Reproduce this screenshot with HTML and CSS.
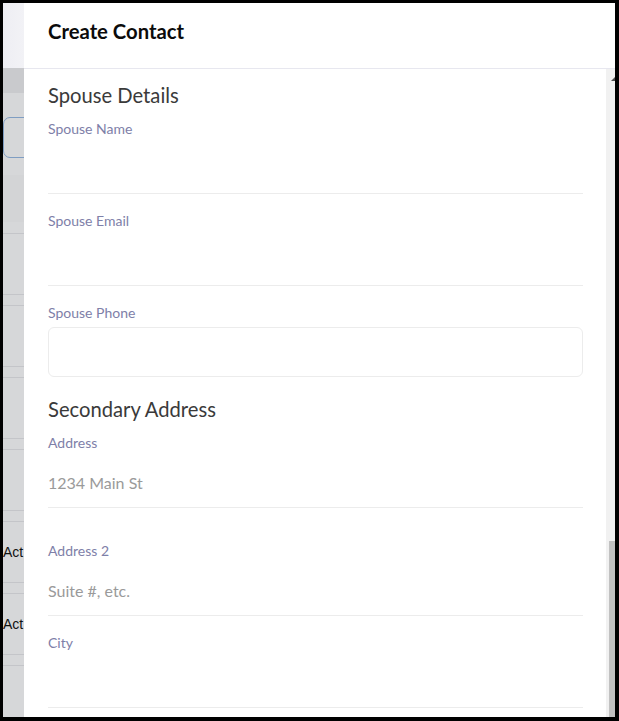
FILE: index.html
```html
<!DOCTYPE html>
<html lang="en">
<head>
<meta charset="utf-8">
<title>Create Contact</title>
<link rel="stylesheet" href="styles.css">
</head>
<body>
<div class="screen">
  <div class="backdrop">
    <div class="bd-top"></div>
    <div class="bd-band"></div>
    <div class="bd-body">
      <div class="bd-input"></div>
      <div class="bd-shade"></div>
      <div class="bd-row"><div class="bd-cell"></div></div>
      <div class="bd-row"><div class="bd-cell"></div></div>
      <div class="bd-row"><div class="bd-cell"></div></div>
      <div class="bd-row"><div class="bd-cell"></div></div>
      <div class="bd-row"><div class="bd-cell">Act</div></div>
      <div class="bd-row"><div class="bd-cell">Act</div></div>
      <div class="bd-row"><div class="bd-cell"></div></div>
    </div>
  </div>
  <div class="panel">
    <header class="panel-header">
      <h1 class="panel-title">Create Contact</h1>
    </header>
    <div class="panel-main">
      <div class="panel-content">
        <h2 class="section-title">Spouse Details</h2>
        <div class="field">
          <label class="field-label">Spouse Name</label>
          <div class="input-line"></div>
        </div>
        <div class="field">
          <label class="field-label">Spouse Email</label>
          <div class="input-line"></div>
        </div>
        <div class="field field-box">
          <label class="field-label">Spouse Phone</label>
          <div class="input-box"></div>
        </div>
        <h2 class="section-title">Secondary Address</h2>
        <div class="field field-spaced">
          <label class="field-label">Address</label>
          <div class="input-line"><span class="placeholder">1234 Main St</span></div>
        </div>
        <div class="field">
          <label class="field-label">Address 2</label>
          <div class="input-line"><span class="placeholder">Suite #, etc.</span></div>
        </div>
        <div class="field">
          <label class="field-label">City</label>
          <div class="input-line"></div>
        </div>
      </div>
      <div class="scrollbar">
        <span class="sb-arrow"></span>
        <span class="sb-thumb"></span>
      </div>
    </div>
  </div>
</div>
</body>
</html>
```

FILE: styles.css
```css
* { box-sizing: border-box; }

html, body {
  margin: 0;
  padding: 0;
  background: #000;
  height: 100%;
}

.screen {
  margin: 3px 4px 4px 3px;
  height: 714px;
  display: flex;
  overflow: hidden;
  background: #fff;
}

/* background page, under the modal */
.backdrop {
  width: 21px;
  flex: 0 0 21px;
  display: flex;
  flex-direction: column;
  overflow: hidden;
  background: #d6d7d9;
}

.bd-top {
  height: 65px;
  flex: 0 0 65px;
  background: linear-gradient(90deg, #eeeef3, #f2f2f6);
}

.bd-band {
  height: 25px;
  flex: 0 0 25px;
  background: #c9cacd;
}

.bd-body {
  flex: 1;
  display: flex;
  flex-direction: column;
  width: 21px;
}

.bd-input {
  margin-top: 24px;
  height: 41px;
  width: 60px;
  flex: 0 0 auto;
  border: 1px solid #7f9dc2;
  border-radius: 7px;
  background: #d6d7d9;
}

.bd-shade {
  margin-top: 17px;
  height: 47px;
  flex: 0 0 auto;
  background: #d3d4d6;
}

.bd-row {
  height: 72px;
  flex: 0 0 72px;
  border-top: 1px solid #c4c5c9;
}

.bd-shade + .bd-row { margin-top: 11px; }

.bd-cell {
  height: 61px;
  border-bottom: 1px solid #c4c5c9;
  display: flex;
  align-items: center;
  font-family: "Liberation Sans", Arial, sans-serif;
  font-size: 14px;
  color: #111;
  white-space: nowrap;
}

/* modal panel */
.panel {
  flex: 1;
  display: flex;
  flex-direction: column;
  background: #fff;
  min-width: 0;
}

.panel-header {
  height: 66px;
  flex: 0 0 66px;
  padding: 16px 0 0 24px;
  border-bottom: 1px solid #e7e7ef;
}

.panel-title {
  margin: 0;
  font-family: Lato, "Noto Sans", sans-serif;
  font-weight: 700;
  font-size: 20.3px;
  line-height: 24px;
  color: #0b0b0b;
}

.panel-main {
  flex: 1;
  display: flex;
  min-height: 0;
}

.panel-content {
  flex: 1;
  padding: 11px 23px 0 24px;
  overflow: hidden;
  font-family: Lato, "Noto Sans", sans-serif;
}

.section-title {
  margin: 3px 0 13px;
  font-weight: 400;
  font-size: 20.2px;
  line-height: 24px;
  color: #3a3a3a;
}

.field { margin-bottom: 18px; }
.field-box { margin-bottom: 20px; }
.field-spaced { margin-bottom: 34px; }

.field-label {
  display: block;
  padding-top: 1px;
  margin-bottom: 6px;
  font-size: 14px;
  line-height: 16px;
  color: #7e80a8;
}

.input-line {
  height: 51px;
  border-bottom: 1px solid #ececec;
  display: flex;
  align-items: center;
}

.input-box {
  margin-top: 2px;
  height: 50px;
  border: 1px solid #ececec;
  border-radius: 6px;
}

.placeholder {
  font-size: 16px;
  color: #9a9a9a;
}

/* scrollbar */
.scrollbar {
  width: 9px;
  flex: 0 0 9px;
  background: #f1f1f1;
  display: flex;
  flex-direction: column;
  overflow: hidden;
}

.sb-arrow {
  display: block;
  width: 0;
  height: 0;
  margin: 8px 0 0 5px;
  border-left: 4px solid transparent;
  border-right: 4px solid transparent;
  border-bottom: 4px solid #505050;
}

.sb-thumb {
  display: block;
  margin-top: auto;
  margin-left: 3px;
  height: 176px;
  width: 8px;
  background: #c1c1c1;
}
```
